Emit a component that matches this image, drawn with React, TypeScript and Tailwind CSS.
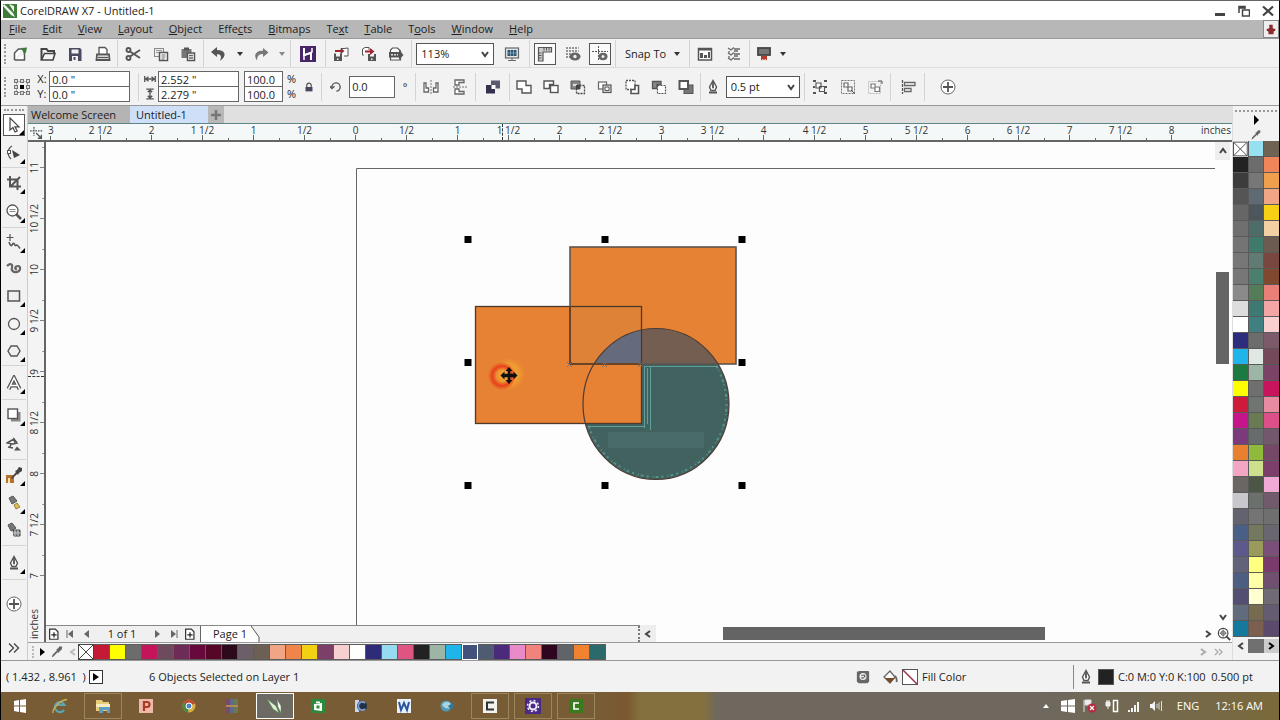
import { useState } from "react";
import type { ReactNode } from "react";

const MENUS = [
  ["", "F", "ile"],
  ["", "E", "dit"],
  ["", "V", "iew"],
  ["", "L", "ayout"],
  ["", "O", "bject"],
  ["Effe", "c", "ts"],
  ["", "B", "itmaps"],
  ["Te", "x", "t"],
  ["", "T", "able"],
  ["T", "o", "ols"],
  ["", "W", "indow"],
  ["", "H", "elp"],
];

const H_RULER = [
  "2 1/2", "2", "1 1/2", "1", "1/2", "0", "1/2", "1", "1 1/2", "2", "2 1/2", "3",
  "3 1/2", "4", "4 1/2", "5", "5 1/2", "6", "6 1/2", "7", "7 1/2", "8",
];

const V_RULER = ["11", "10 1/2", "10", "9 1/2", "9", "8 1/2", "8", "7 1/2", "7"];

const DOC_PALETTE = [
  "none", "#c41a36", "#ffff00", "#6c6c6c", "#c4155a", "#6d4a5c", "#6f2b58", "#68083c",
  "#560628", "#2c0a1c", "#6c6068", "#6c6055", "#f0a585", "#f0854c", "#f2d012", "#7c3f68",
  "#f6cfcf", "#ffffff", "#2e2c78", "#96dcf0", "#e05482", "#222222", "#9db5a5", "#1fb5ea",
  "#44507c", "#4f5b70", "#4b2a7c", "#e88bc8", "#f0837c", "#2f061f", "#606468", "#f08230",
  "#2a6a6a",
];

// default CMYK palette, one array per column
const CMYK_PALETTE = [
  [
    "none", "#222222", "#3c3c3c", "#555555", "#666666", "#6f6f6f", "#747474", "#777777",
    "#777777", "#8a8a8a", "#dddddd", "#ffffff", "#2e2c7c", "#1fb5ea", "#1b7a3f", "#ffff00",
    "#cf1b3b", "#c5158a", "#7a3a7b", "#e8802f", "#f2a6c4", "#6a6664", "#c8c8cc", "#62636f",
    "#4a5f86", "#5c5a8c", "#62637a", "#4c5f82", "#534f72", "#606c7c", "#14799c",
  ],
  [
    "#96e0f0", "#6c6c6c", "#777777", "#606a74", "#4c565c", "#4e6c69", "#3f7a6c", "#5f7b74",
    "#4a7f6e", "#547c58", "#3f7a72", "#3f7f80", "#6c6c6c", "#dfe8e2", "#9db5a5", "#6f6f6f",
    "#717571", "#6a7a52", "#656c6b", "#8fba3c", "#cde08c", "#4c5644", "#6c706c", "#747474",
    "#74785f", "#999a5c", "#ffff80", "#ffffa8", "#ffffd2", "#766a50", "#7c5f4e",
  ],
  [
    "#6f6353", "#f0855a", "#f0a04c", "#f0a585", "#f7cf14", "#f3cfa4", "#6c5b50", "#7a4640",
    "#80492f", "#ea7f78", "#f3a4a4", "#f9d0cf", "#7c5a6a", "#744a5a", "#7b4466", "#c8145c",
    "#e88ba0", "#dd4f88", "#73576c", "#764868", "#7c3f6c", "#f0a8d4", "#705a6c", "#6f6f6f",
    "#6a6670", "#7a5078", "#7a3a6c", "#6f5070", "#706a74", "#645c70", "#5c4a6c",
  ],
];

const G = "#555";

const ICONS: Record<string, ReactNode> = {
  newDoc: (
    <>
      <path d="M2.5 14V7l4-4H10M12.500 8v6h-10" stroke={G} strokeWidth="1.5" fill="#fff" />
      <path d="M9 2l6-.5-1 5-2 2.500-1-3.500z" fill="#3e7a3e" />
    </>
  ),
  open: (
    <>
      <path d="M1.5 14V3h5L8 5h6v2" stroke="#444" strokeWidth="2" fill="none" />
      <path d="M1.5 14l3-6.500H15L13 14z" fill="#f4f4f4" stroke="#444" strokeWidth="1.6" />
    </>
  ),
  save: (
    <path
      d="M2 2h11l1.500 1.500V15H2zM4.500 3.500v4h7v-4zM5 10v5h6v-5zM6.500 11h2v3h-2z"
      fill="#4a4a60"
      fillRule="evenodd"
    />
  ),
  print: (
    <>
      <path d="M4 8V1.500h6l2 2V8" fill="#fff" stroke={G} strokeWidth="1.3" />
      <path d="M2 8.500h12l.5 5.500h-13z" fill="#fff" stroke={G} strokeWidth="1.8" />
      <path d="M3 11.500h10" stroke={G} strokeWidth="1.5" />
    </>
  ),
  cut: (
    <g fill="none" stroke={G} strokeWidth="1.9">
      <circle cx="3.500" cy="4" r="2" />
      <circle cx="3.500" cy="12" r="2" />
      <path d="M5 5.500L15 12M5 10.500L15 4" />
    </g>
  ),
  copy: (
    <>
      <rect x="1.500" y="2.500" width="9" height="8" fill="#eee" stroke="#888" />
      <path d="M3 4.500h6M3 6.500h3" stroke="#999" />
      <rect x="6.500" y="6.500" width="8" height="8" fill="#fff" stroke={G} strokeWidth="1.5" />
      <path d="M8.500 9h4M8.500 11h4M8.500 13h3" stroke="#666" />
    </>
  ),
  paste: (
    <>
      <path d="M1.5 3h10v9h-10z" fill="#777" />
      <path d="M4 1.500h5v3H4z" fill="#555" />
      <rect x="7.500" y="7" width="7" height="7.500" fill="#fff" stroke={G} strokeWidth="1.5" />
      <path d="M9 9.500h4M9 12h4" stroke="#666" strokeWidth="1.300" />
    </>
  ),
  undo: <path d="M6 1L0 6l6 5V8.200c4-.2 5 2 3 6.800C16 10 15 4 6 4z" fill="#555" />,
  redo: <path d="M10 2l5.500 4.500L10 11V8C6 8 4 10 4 14.500 0 9 3 4.500 10 4.700z" fill="#777" />,
  search: (
    <>
      <rect width="16" height="16" fill="#472566" />
      <path d="M4 2v7l7-2v7" stroke="#fff" strokeWidth="2" fill="none" />
      <path d="M12 2v4L4 9.500V14" stroke="#fff" strokeWidth="1.500" fill="none" />
    </>
  ),
  importI: (
    <>
      <path d="M8 8V2.500h3l4-.5v8h-4" fill="#fff" stroke={G} />
      <path d="M2 5h7" stroke="#a02430" strokeWidth="2" />
      <path d="M8 2L11.500 5 8 8z" fill="#a02430" />
      <path d="M1 7.500h8V15H1zM3 7.500v3h4v-3zM4 12.500v1.500h1.500v-1.500z" fill={G} fillRule="evenodd" />
    </>
  ),
  exportI: (
    <>
      <path d="M3 9H1.500V3L4 1.500h4V4" fill="#fff" stroke={G} />
      <path d="M4 5.500h6" stroke="#a02430" strokeWidth="2" />
      <path d="M9 2l4.500 3.500L9 9z" fill="#a02430" />
      <path d="M7 8h8v7H7zM9 8v2.500h4V8zM10 12.500V14h1.500v-1.500z" fill={G} fillRule="evenodd" />
    </>
  ),
  publish: (
    <>
      <path d="M2.500 14V4l2-2h5l3 3v9z" fill="#fff" stroke={G} strokeWidth="1.2" />
      <path d="M1 6h10V3.500L15.500 9 11 14v-2.500H1z" fill="#555" />
      <path d="M3 8.800h7" stroke="#ddd" strokeDasharray="2 1" strokeWidth="1.500" />
    </>
  ),
  fullscreen: (
    <>
      <rect x="1.500" y="2" width="13" height="10" fill="#dfe8ee" stroke="#666" strokeWidth="1.2" />
      <rect x="3.500" y="4" width="9" height="6" fill="#2f5470" />
      <path d="M6.500 4v6M9.500 4v6M4 7h8" stroke="#7d9aae" />
      <path d="M4 14.500h8M8 12v2" stroke="#666" />
    </>
  ),
  rulers: (
    <>
      <path d="M1.500 1.500h13V6H6v9H1.500z" fill="#ccc" stroke="#555" strokeWidth="1.2" />
      <path d="M7 2v2.500M9.500 2v2.500M12 2v2.500M2 7h2.500M2 9.500h2.500M2 12h2.500" stroke="#555" />
    </>
  ),
  gridEye: (
    <>
      <path d="M1 2h13M1 5h13M1 8h6M1 11h5M2 1v12M5 1v12M8 1v6M11 1v5" stroke="#777" strokeDasharray="2 1" />
      <ellipse cx="10" cy="10.500" rx="5.500" ry="4" fill="#666" />
      <circle cx="10" cy="10.500" r="1.700" fill="#eee" />
    </>
  ),
  guideEye: (
    <>
      <path d="M0 5.500h16M6.500 0v14" stroke={G} strokeDasharray="2 1" />
      <ellipse cx="11" cy="10.500" rx="4.500" ry="3.700" fill="#666" />
      <circle cx="11" cy="10.500" r="1.500" fill="#eee" />
    </>
  ),
  options: (
    <>
      <rect x="1.500" y="2.500" width="13" height="11.500" fill="#fff" stroke={G} strokeWidth="1.500" />
      <path d="M1 3.500h14" stroke={G} strokeWidth="2" />
      <path d="M3 7h3v5H3zM7 9h3v3H7zM11 6h2v6h-2z" fill={G} />
    </>
  ),
  launcher: (
    <path
      d="M2 2l3 2 3-2.500M2 7l3 2 3-2.500M2 12l3 2 3-2.500M8 3h6M8 5h4M8 8h6M8 10h4M8 13h6M3 5v2M3 10v2"
      stroke="#666"
      strokeWidth="1.300"
      fill="none"
    />
  ),
  present: (
    <>
      <rect x="2" y="2" width="12" height="7" fill="#777" stroke="#444" strokeWidth="1.8" />
      <path d="M5 10h6v4.500l-2-1.500-1 1.500L7 13l-2 1.500z" fill="#b83a2a" />
    </>
  ),
  origin: (
    <>
      <path d="M2.500 2.500h11v11h-11z" stroke="#777" fill="none" strokeDasharray="2 1" />
      <path d="M0 0h4v4H0zM6 0h4v4H6zM12 0h4v4h-4zM0 6h4v4H0zM12 6h4v4h-4zM0 12h4v4H0zM6 12h4v4H6zM12 12h4v4h-4z" fill="#777" />
      <path d="M1 1h2v2H1zM7 1h2v2H7zM13 1h2v2h-2zM1 7h2v2H1zM13 7h2v2h-2zM1 13h2v2H1zM7 13h2v2H7zM13 13h2v2h-2z" fill="#ddd" />
      <rect x="6" y="6" width="4" height="4" fill="#000" />
    </>
  ),
  widthI: <path d="M1 4v8M15 4v8M1.500 8h13M6 5L2.500 8 6 11M10 5l3.500 3-3.500 3" stroke={G} strokeWidth="1.8" fill="none" />,
  heightI: <path d="M3 1.500h10M3 14.500h10M8 2v12M5 5.500L8 3l3 2.500M5 10.500L8 13l3-2.500" stroke={G} strokeWidth="1.8" fill="none" />,
  lock: (
    <>
      <path d="M5.500 8V6a2.500 2.500 0 015 0v2" stroke="#555" strokeWidth="1.400" fill="none" />
      <rect x="4" y="8" width="8" height="5" fill="#4a4560" />
    </>
  ),
  rotate: (
    <path d="M2.500 8a5.500 5.500 0 116 5.500M0 7l2.500 3L6 7" stroke={G} strokeWidth="1.800" fill="none" />
  ),
  mirrorH: (
    <>
      <path d="M8 1v14" stroke="#777" strokeDasharray="2 1" />
      <path d="M1 4h2v5h2.500v4H1zM15 4h-2v5h-2.500v4H15z" fill="#fff" stroke="#666" strokeWidth="1.300" />
    </>
  ),
  mirrorV: (
    <>
      <path d="M1 8h14" stroke="#777" strokeDasharray="2 1" />
      <path d="M3 1h9v2.500H7V6H3zM3 15h9v-2.500H7V10H3z" fill="#fff" stroke="#666" strokeWidth="1.300" />
    </>
  ),
  front: (
    <>
      <path d="M6 1.500h9v8H6z" fill="#5b5870" />
      <path d="M1 6h9v8.500H1z" fill="#35324f" />
      <rect x="6.500" y="6" width="4" height="4" fill="#fff" />
    </>
  ),
  weld: <path d="M1 2h9v4.500h5v7.500H6v-4H1z" fill="#fff" stroke={G} strokeWidth="1.400" />,
  trim: (
    <>
      <path d="M1 2h9.500v3.500h-4v4H1z" fill="#fff" stroke={G} strokeWidth="1.400" />
      <rect x="7.500" y="6.500" width="7.500" height="7" fill="#fff" stroke={G} strokeWidth="1.400" />
    </>
  ),
  intersect: (
    <>
      <path d="M1 2h9v8H1z" fill="#888" stroke={G} />
      <path d="M6.500 6.500h8v8h-8z" fill="none" stroke="#444" strokeDasharray="2 1" strokeWidth="1.300" />
      <path d="M3 5h4v2H3z" fill="#ddd" />
      <path d="M6 6h4v4H6z" fill="#444" />
    </>
  ),
  simplify: (
    <>
      <rect x="1.500" y="3" width="8" height="7" fill="#fff" stroke="#666" strokeWidth="1.2" />
      <rect x="6" y="6" width="8" height="7.500" fill="#ddd" stroke={G} strokeWidth="1.2" />
      <path d="M8 8h4v3.500H8z" fill="#fff" stroke={G} />
    </>
  ),
  frontMinus: (
    <>
      <rect x="2" y="1.500" width="9" height="9" fill="#fff" stroke="#555" strokeDasharray="2 1" strokeWidth="1.300" />
      <path d="M11 6.500h3.500v8H7v-4h4z" fill="#fff" stroke={G} strokeWidth="1.600" />
    </>
  ),
  backMinus: (
    <>
      <path d="M1.500 2.500H10v3H6v4H1.500z" fill="#888" stroke={G} strokeWidth="1.300" />
      <rect x="6.500" y="6.500" width="8" height="8" fill="#fff" stroke={G} strokeDasharray="2 1" strokeWidth="1.200" />
    </>
  ),
  boundary: (
    <>
      <rect x="6" y="6" width="9" height="8.500" fill="#777" stroke="#555" />
      <rect x="1.500" y="2" width="8.500" height="8" fill="#fff" stroke={G} strokeWidth="2" />
    </>
  ),
  nib: (
    <>
      <path d="M8 1.500L4.500 8 6 11.500h4L11.500 8z" fill="#fff" stroke={G} strokeWidth="1.400" />
      <path d="M8 3v5M4 13.500h8" stroke={G} strokeWidth="1.800" />
      <circle cx="8" cy="8.500" r="1" fill={G} />
    </>
  ),
  group: (
    <>
      <path d="M1 1h3v2H1zM12 1h3v2h-3zM1 13h3v2H1zM12 13h3v2h-3zM1 7h2v2H1zM13 7h2v2h-2z" fill={G} />
      <path d="M4 4h5v5H4zM7.500 7.500h5v5h-5z" fill="#fff" stroke={G} strokeWidth="1.200" />
    </>
  ),
  ungroup: (
    <>
      <rect x="1.500" y="1.500" width="13" height="13" fill="none" stroke="#777" strokeDasharray="2 1" />
      <path d="M4 4h4v4H4zM8 8h4v4H8z" fill="#fff" stroke="#666" strokeWidth="1.200" />
      <path d="M11 11l4 4" stroke={G} />
    </>
  ),
  ungroupAll: (
    <>
      <rect x="1.500" y="2.500" width="12" height="12" fill="none" stroke="#bbb" strokeDasharray="2 1" />
      <path d="M4 5h4v4H4zM8 8h4.500v4.500H8z" fill="#fff" stroke="#777" strokeWidth="1.200" />
      <path d="M11 2h4v3" stroke={G} fill="none" />
    </>
  ),
  align: (
    <>
      <path d="M2.500 1v14" stroke={G} strokeDasharray="3 1" strokeWidth="1.300" />
      <path d="M4.500 3.500H15v3H4.500zM4.500 9.500H11v3H4.500z" fill="#fff" stroke="#666" strokeWidth="1.300" />
    </>
  ),
  plus: (
    <>
      <circle cx="8" cy="8" r="7" fill="#fff" stroke="#666" />
      <path d="M8 3v10M3 8h10" stroke={G} strokeWidth="1.800" />
    </>
  ),
  pick: <path d="M4 1v12l3-2.500L9 15l2.200-1L9 9.800h4z" fill="#fff" stroke="#444" strokeWidth="1.200" />,
  shape: (
    <>
      <path d="M6 1C1 4 1 10 5 14" stroke={G} strokeWidth="1.300" fill="none" />
      <rect x="1.500" y="5.500" width="3" height="3" fill="#fff" stroke={G} />
      <path d="M6 5l8 5-6 3z" fill="#444" />
    </>
  ),
  crop: <path d="M4 1v10.500h11M1 4.500h10.500V15M5 11l9-9" stroke={G} strokeWidth="2" fill="none" />,
  zoomT: (
    <>
      <circle cx="6.500" cy="6.500" r="5.500" fill="#fff" stroke={G} strokeWidth="1.300" />
      <path d="M3.500 5.500h6M3.500 7.500h6" stroke="#888" />
      <path d="M10 10l5 5" stroke={G} strokeWidth="2.500" />
    </>
  ),
  freehand: (
    <>
      <path d="M4 0v7M.5 3.500h7" stroke={G} strokeWidth="1.200" />
      <path d="M3 8c2 6 3 3 4 1.500s2 3 3 2 2 0 4 3" stroke={G} strokeWidth="1.600" fill="none" />
    </>
  ),
  artistic: (
    <path d="M1 5c3-3 6-2 5 1s1 6 5 5 4-6 1-6-4 3-1 3.500" stroke="#666" strokeWidth="2.200" fill="none" />
  ),
  rectT: <rect x="2" y="3" width="11.500" height="10" fill="#f0f0f0" stroke={G} strokeWidth="1.500" />,
  ellipseT: <circle cx="8" cy="8" r="5.500" fill="#f4f4f4" stroke={G} strokeWidth="1.300" />,
  polygonT: <path d="M5 3h6l3 5-3 5H5L2 8z" fill="#f0f0f0" stroke={G} strokeWidth="1.400" />,
  textT: (
    <>
      <path d="M2.500 14L8 3l5.500 11M5 10.500h6" stroke={G} strokeWidth="4" fill="none" />
      <path d="M2.500 14L8 3l5.500 11M5 10.500h6" stroke="#fff" strokeWidth="1.500" fill="none" />
    </>
  ),
  shadowT: (
    <>
      <path d="M5 5h9.500v9.500H5z" fill="#888" />
      <rect x="2" y="2" width="9.500" height="9.500" fill="#fff" stroke={G} strokeWidth="1.400" />
    </>
  ),
  transp: (
    <>
      <path d="M1 7l7-4 3 4-4 1zM5 8l-1 3M2 11l5 1" fill="#fff" stroke={G} strokeWidth="1.500" />
      <path d="M8 14.500l3-4 4 4z" fill={G} />
      <path d="M7 1l4 5-3 1z" fill={G} />
    </>
  ),
  dropperT: (
    <>
      <path d="M0 8h8v8H0z" fill="#b5702c" />
      <path d="M2 11h2v5H2z" fill="#fbe2b8" />
      <path d="M5 11l5-6-1-1 2-1 2-3 3 1v3l-3 2-1 2-1-1-5 5z" fill="#444" />
    </>
  ),
  fillT: (
    <>
      <path d="M3 3l4-2 4 5-5 3z" fill="#777" stroke={G} />
      <path d="M8 10l3-2 3 4-4 2z" fill="#e0bd50" stroke="#998040" />
    </>
  ),
  meshT: (
    <>
      <path d="M2 3l4-2 4 5-5 3z" fill="#777" stroke={G} />
      <path d="M7 8h7v6H8z" fill="#777" stroke="#444" />
      <path d="M9 8v6M12 8v6M7 11h7" stroke="#ccc" />
    </>
  ),
  chevrons: <path d="M3 3.500L7.500 8 3 12.500M8 3.500l4.500 4.500L8 12.500" stroke="#444" strokeWidth="1.300" fill="none" />,
  pageAdd: (
    <>
      <path d="M3 2.500h6.500l3 3V14H3z" fill="#fff" stroke="#333" strokeWidth="1.400" />
      <path d="M8 6v6M5 9h6" stroke="#222" strokeWidth="1.400" />
    </>
  ),
  dropper: <path d="M2 14l1-3 5-5-1-1 2-1 2-2.500L14 2l-.5 3L11 7l-1 2-1-1-5 5z" fill="#666" />,
  navigator: (
    <>
      <circle cx="7" cy="7" r="5.500" fill="#fff" stroke="#444" strokeWidth="1.300" />
      <circle cx="7" cy="7" r="2.500" fill="none" stroke="#555" />
      <path d="M7 3v8M3 7h8" stroke="#555" />
      <path d="M10.500 10.500L15 15" stroke="#444" strokeWidth="2.200" />
    </>
  ),
  corner: (
    <>
      <path d="M4.500 1v10M0 5.500h14" stroke={G} strokeDasharray="2 1" strokeWidth="1.400" />
      <path d="M7 8l6 6M13 10v4H9" stroke={G} strokeWidth="1.500" fill="none" />
    </>
  ),
  snapshot: (
    <>
      <path d="M1 2l3-1h10l1 1v11l-2 2H3l-2-2z" fill="#666" />
      <circle cx="8" cy="7.500" r="4" fill="#eee" />
      <path d="M6 6h4v2.500M6 9h3" stroke="#555" strokeWidth="1.300" fill="none" />
    </>
  ),
  bucket: (
    <>
      <path d="M2 8l6-6 5 6-5 6z" fill="#fff" stroke="#666" strokeWidth="1.300" />
      <path d="M3 9h10l-5 5z" fill="#7a4a24" />
      <path d="M13 7c2 2 2 4 1.500 6" stroke="#666" strokeWidth="1.800" fill="none" />
    </>
  ),
};

const Icon = ({ name, className = "size-4" }: { name: string; className?: string }) => (
  <svg viewBox="0 0 16 16" className={`shrink-0 ${className}`} aria-hidden="true">
    {ICONS[name]}
  </svg>
);

const Caret = ({ muted = false }: { muted?: boolean }) => (
  <svg viewBox="0 0 6 4" className="h-1 w-1.5">
    <path d="M0 0h6L3 4z" fill={muted ? "#888" : "#333"} />
  </svg>
);

const Chevron = ({ dir, color = "#444" }: { dir: "left" | "right" | "up" | "down"; color?: string }) => {
  const d = {
    left: "M7 2L3 5l4 3",
    right: "M3 2l4 3-4 3",
    up: "M2 7l3-4 3 4",
    down: "M2 3l3 4 3-4",
  }[dir];
  return (
    <svg viewBox="0 0 10 10" className="size-2.5">
      <path d={d} stroke={color} strokeWidth="2" fill="none" />
    </svg>
  );
};

const ToolButton = ({ icon, label, boxed = false }: { icon: string; label: string; boxed?: boolean }) => (
  <button aria-label={label} className="flex h-[26px] w-[26px] shrink-0 items-center justify-center">
    <span
      className={
        boxed
          ? "flex h-[22px] w-[22px] items-center justify-center border border-[#555] bg-[#fafafa]"
          : "flex"
      }
    >
      <Icon name={icon} />
    </span>
  </button>
);

const CaretButton = ({ label, muted }: { label: string; muted?: boolean }) => (
  <button aria-label={label} className="flex h-[26px] w-3 shrink-0 items-center justify-center">
    <Caret muted={muted} />
  </button>
);

const Group = ({ className, children }: { className: string; children: ReactNode }) => (
  <div className={`flex h-7 shrink-0 items-center justify-evenly border-[#d4d4d4] ${className}`}>{children}</div>
);

const Grip = () => (
  <div className="ml-[3px] h-5 w-0 shrink-0 border-l-2 border-dotted border-[#999]" />
);

const TitleBar = () => (
  <header className="flex h-[19px] shrink-0 items-center bg-white pl-0.5">
    <svg viewBox="0 0 14 14" className="size-3.5">
      <rect width="14" height="14" fill="#3f7c3a" />
      <path d="M1 0l9 9 2 4-4-2-8-9zM6 0l5 8V2z" fill="#f4f4f4" />
    </svg>
    <h1 className="ml-[3px] text-[11px] leading-4 text-[#222]">CorelDRAW X7 - Untitled-1</h1>
    <div className="ml-auto flex items-center gap-1.5 pr-0.5">
      <button aria-label="Minimize" className="flex h-4 w-[18px] items-end justify-center pb-[3px]">
        <span className="h-[3px] w-2.5 bg-[#444]" />
      </button>
      <button aria-label="Restore" className="flex h-4 w-[18px] items-center justify-center">
        <svg viewBox="0 0 12 12" className="size-3">
          <path d="M1 8V1.500h6V4M1 3h6" stroke="#444" strokeWidth="1.500" fill="none" />
          <rect x="4.500" y="5" width="7" height="6" fill="#fff" stroke="#444" strokeWidth="1.500" />
        </svg>
      </button>
      <button aria-label="Close" className="flex h-4 w-[18px] items-center justify-center">
        <svg viewBox="0 0 12 12" className="size-3">
          <path d="M1 1.500l10 9M11 1.500l-10 9" stroke="#444" strokeWidth="2.200" />
        </svg>
      </button>
    </div>
  </header>
);

const MenuBar = () => (
  <nav className="flex h-[19px] shrink-0 items-center border-b border-[#999] bg-[#b7b7b7]">
    {MENUS.map(([pre, key, post]) => (
      <button key={pre + key + post} className="px-2 text-[11px] leading-4 text-[#222]">
        {pre}
        <u>{key}</u>
        {post}
      </button>
    ))}
    <button aria-label="Sign in" className="ml-auto flex h-full w-4 items-center justify-center border border-[#888] bg-[#eee]">
      <svg viewBox="0 0 14 14" className="size-3">
        <path d="M4 13v-3L2 9V7l3-1V2h4v4l3 1v2l-2 1v3z" fill="#8a2c2c" />
      </svg>
    </button>
  </nav>
);

const StandardBar = () => (
  <div className="flex h-7 shrink-0 items-center bg-[#f2f2f2] pt-0.5 text-[11px] text-[#222]">
    <Grip />
    <Group className="w-[112px] border-r">
      <ToolButton icon="newDoc" label="New" />
      <ToolButton icon="open" label="Open" />
      <ToolButton icon="save" label="Save" />
      <ToolButton icon="print" label="Print" />
    </Group>
    <Group className="w-[86px] border-r">
      <ToolButton icon="cut" label="Cut" />
      <ToolButton icon="copy" label="Copy" />
      <ToolButton icon="paste" label="Paste" />
    </Group>
    <Group className="w-[87px] border-r">
      <ToolButton icon="undo" label="Undo" />
      <CaretButton label="Undo history" />
      <ToolButton icon="redo" label="Redo" />
      <CaretButton label="Redo history" muted />
    </Group>
    <Group className="w-[35px] border-r">
      <ToolButton icon="search" label="Search content" />
    </Group>
    <Group className="w-[86px] border-r">
      <ToolButton icon="importI" label="Import" />
      <ToolButton icon="exportI" label="Export" />
      <ToolButton icon="publish" label="Publish to PDF" />
    </Group>
    <Group className="w-[118px] border-r">
      <label className="relative flex">
        <select
          aria-label="Zoom level"
          className="h-[22px] w-[78px] appearance-none border border-[#555] bg-white pl-1 leading-4"
        >
          <option>113%</option>
        </select>
        <span className="pointer-events-none absolute top-1.5 right-1">
          <Chevron dir="down" />
        </span>
      </label>
      <ToolButton icon="fullscreen" label="Full-screen preview" />
    </Group>
    <Group className="w-[86px] border-r">
      <ToolButton icon="rulers" label="Show rulers" boxed />
      <ToolButton icon="gridEye" label="Show grid" />
      <ToolButton icon="guideEye" label="Show guidelines" boxed />
    </Group>
    <Group className="w-[74px] border-r">
      <button className="flex items-center gap-2 whitespace-nowrap">
        Snap To
        <Caret />
      </button>
    </Group>
    <Group className="w-[60px] border-r">
      <ToolButton icon="options" label="Options" />
      <ToolButton icon="launcher" label="Application launcher" />
    </Group>
    <Group className="w-10">
      <ToolButton icon="present" label="Welcome" />
      <CaretButton label="Welcome options" />
    </Group>
  </div>
);

const Field = ({ label, value, className }: { label: string; value: string; className: string }) => {
  const [text, setText] = useState(value);
  return (
    <input
      aria-label={label}
      value={text}
      onChange={(e) => setText(e.target.value)}
      className={`border border-[#666] bg-white pl-0.5 leading-3 ${className}`}
    />
  );
};

const PropertyBar = () => (
  <div className="flex h-[39px] shrink-0 items-center border-t border-b border-t-[#dcdcdc] border-b-[#999] bg-[#f2f2f2] text-[11px] leading-4 text-[#222]">
    <Grip />
    <Group className="w-[133px] border-r">
      <Icon name="origin" />
      <div className="grid grid-cols-[12px_81px] grid-rows-[15px_15px] items-center">
        <span>X:</span>
        <Field label="X position" value={'0.0 "'} className="h-4" />
        <span>Y:</span>
        <Field label="Y position" value={'0.0 "'} className="h-4" />
      </div>
    </Group>
    <Group className="w-[183px] border-r">
      <div className="grid grid-cols-[14px_81px] grid-rows-[15px_15px] items-center">
        <Icon name="widthI" className="size-3" />
        <Field label="Width" value={'2.552 "'} className="h-4" />
        <Icon name="heightI" className="size-3" />
        <Field label="Height" value={'2.279 "'} className="h-4" />
      </div>
      <div className="grid grid-cols-[39px_14px] grid-rows-[15px_15px] items-center">
        <Field label="Horizontal scale" value="100.0" className="h-4" />
        <span className="pl-1">%</span>
        <Field label="Vertical scale" value="100.0" className="h-4" />
        <span className="pl-1">%</span>
      </div>
      <button aria-label="Lock ratio">
        <Icon name="lock" className="size-3.5" />
      </button>
    </Group>
    <Group className="w-[94px] border-r">
      <Icon name="rotate" className="size-3" />
      <Field label="Angle of rotation" value="0.0" className="h-[22px] w-[46px]" />
      <span>°</span>
    </Group>
    <Group className="w-[60px] border-r">
      <ToolButton icon="mirrorH" label="Mirror horizontally" />
      <ToolButton icon="mirrorV" label="Mirror vertically" />
    </Group>
    <Group className="w-[34px] border-r">
      <ToolButton icon="front" label="Order" />
    </Group>
    <Group className="w-[191px] border-r">
      <ToolButton icon="weld" label="Weld" />
      <ToolButton icon="trim" label="Trim" />
      <ToolButton icon="intersect" label="Intersect" />
      <ToolButton icon="simplify" label="Simplify" />
      <ToolButton icon="frontMinus" label="Front minus back" />
      <ToolButton icon="backMinus" label="Back minus front" />
      <ToolButton icon="boundary" label="Boundary" />
    </Group>
    <Group className="w-[104px] border-r">
      <Icon name="nib" />
      <label className="relative flex">
        <select
          aria-label="Outline width"
          className="h-[22px] w-[74px] appearance-none border border-[#555] bg-white pl-1 leading-4"
        >
          <option>0.5 pt</option>
        </select>
        <span className="pointer-events-none absolute top-1.5 right-1">
          <Chevron dir="down" />
        </span>
      </label>
    </Group>
    <Group className="w-[86px] border-r">
      <ToolButton icon="group" label="Group" />
      <ToolButton icon="ungroup" label="Ungroup" />
      <ToolButton icon="ungroupAll" label="Ungroup all" />
    </Group>
    <Group className="w-[34px] border-r">
      <ToolButton icon="align" label="Align and distribute" />
    </Group>
    <Group className="w-[46px]">
      <ToolButton icon="plus" label="Quick customize" />
    </Group>
  </div>
);

const TOOL_GROUPS = [
  { height: "h-[57px]", tools: ["pick", "shape"] },
  { height: "h-15", tools: ["crop", "zoomT"] },
  { height: "h-[138px]", tools: ["freehand", "artistic", "rectT", "ellipseT", "polygonT"] },
  { height: "h-[34px]", tools: ["textT"] },
  { height: "h-15", tools: ["shadowT", "transp"] },
  { height: "h-[86px]", tools: ["dropperT", "fillT", "meshT"] },
  { height: "h-[34px]", tools: ["nib"] },
];

const NO_FLYOUT = ["artistic", "transp", "meshT"];

const Toolbox = () => (
  <aside className="flex w-[27px] shrink-0 flex-col items-center border-r border-[#ccc] bg-[#f2f2f2]">
    <div className="mt-[3px] h-0 w-5 shrink-0 border-t-2 border-dotted border-[#999]" />
    {TOOL_GROUPS.map((group) => (
      <div
        key={group.tools[0]}
        className={`flex w-6 shrink-0 flex-col items-center justify-evenly border-b border-[#d4d4d4] ${group.height}`}
      >
        {group.tools.map((tool) => (
          <button key={tool} aria-label={tool} className="flex h-[26px] w-[22px] items-center">
            <span
              className={
                tool === "pick"
                  ? "relative flex size-[22px] items-center justify-center border border-[#555] bg-white"
                  : "relative flex size-[22px] items-center justify-center"
              }
            >
              <Icon name={tool} />
              {!NO_FLYOUT.includes(tool) && (
                <svg viewBox="0 0 5 5" className="absolute right-0 bottom-0 size-[5px]">
                  <path d="M5 0v5H0z" fill="#000" />
                </svg>
              )}
            </span>
          </button>
        ))}
      </div>
    ))}
    <button aria-label="Quick customize" className="mt-4">
      <Icon name="plus" />
    </button>
    <button aria-label="More tools" className="mt-auto mb-1">
      <Icon name="chevrons" />
    </button>
  </aside>
);

const HTicks = () => (
  <svg viewBox="0 0 51 5" className="h-[5px] w-[51px]">
    <path d="M0.500 3v2M25.500 0v5" stroke="#666" />
  </svg>
);

const VTicks = () => (
  <svg viewBox="0 0 5 51" className="h-[51px] w-[5px]">
    <path d="M3 0.500h2M0 25.500h5" stroke="#666" />
  </svg>
);

const HorizontalRuler = () => (
  <div className="relative flex h-[19px] shrink-0 overflow-hidden border-t border-b-2 border-t-[#5e8585] border-b-[#666] bg-[#f4f8f8] text-[10px] leading-3 text-[#333]">
    <button aria-label="Ruler origin" className="flex w-[18px] shrink-0 items-end justify-center">
      <Icon name="corner" className="size-3.5" />
    </button>
    <div className="flex w-[29px] shrink-0 flex-col justify-between pl-0.5">
      <span>3</span>
      <svg viewBox="0 0 5 4" className="h-1 w-[5px]">
        <path d="M2.500 0v4" stroke="#666" />
      </svg>
    </div>
    {H_RULER.map((label, i) => (
      <div key={i} className="flex w-[51px] shrink-0 flex-col items-center justify-between">
        <span className="h-2.5">{label}</span>
        <HTicks />
      </div>
    ))}
    <span className="ml-1">inches</span>
    <span className="absolute top-0 left-[474px] h-4 w-px border-l border-dashed border-[#333]" />
  </div>
);

const VerticalRuler = () => (
  <div className="relative flex w-[18px] shrink-0 flex-col overflow-hidden border-r-2 border-[#666] bg-[#f4f4f4] text-[10px] leading-3 text-[#333]">
    {V_RULER.map((label) => (
      <div key={label} className="flex h-[51px] shrink-0 items-center justify-between">
        <span className="w-3 rotate-180 text-center [writing-mode:vertical-rl]">{label}</span>
        <VTicks />
      </div>
    ))}
    <span className="mt-2 w-3 rotate-180 [writing-mode:vertical-rl]">inches</span>
    <span className="absolute top-[234px] left-0 h-px w-4 border-t border-dashed border-[#333]" />
  </div>
);

const HANDLES = [
  [468, 239], [605, 239], [742, 239],
  [468, 362], [742, 362],
  [468, 485], [605, 485], [742, 485],
];

const Drawing = () => (
  <svg className="h-full min-h-0 w-full min-w-0 flex-1 bg-[#fdfdfd]" role="img" aria-label="Drawing page">
    <defs>
      <clipPath id="backRect">
        <rect x="570" y="247" width="166" height="117" />
      </clipPath>
      <clipPath id="overlap">
        <rect x="570" y="306" width="71" height="58" />
      </clipPath>
      <radialGradient id="clickGlow">
        <stop offset="0" stopColor="#f5b040" />
        <stop offset="0.600" stopColor="#f0a030" stopOpacity="0.800" />
        <stop offset="1" stopColor="#e88230" stopOpacity="0" />
      </radialGradient>
      <radialGradient id="clickRing">
        <stop offset="0.400" stopColor="#e8401c" stopOpacity="0" />
        <stop offset="0.700" stopColor="#e8401c" />
        <stop offset="1" stopColor="#e8401c" stopOpacity="0" />
      </radialGradient>
    </defs>
    <g transform="translate(-46 -142)">
      <path d="M356.500 1200V168.500H3000" stroke="#666" fill="none" />
      <ellipse cx="656" cy="404" rx="73" ry="75.500" fill="#41625f" />
      <ellipse cx="656" cy="404" rx="70.500" ry="73" fill="none" stroke="#56908d" strokeWidth="2" strokeDasharray="2 3 3 2 1 4" />
      <path d="M608 432h96v16h-96z" fill="#496c69" />
      <path d="M644.500 366v62M647.500 368v56M650.500 366v64M588 426.500h56M645 366.500h73" stroke="#5fa09c" fill="none" />
      <rect x="570" y="247" width="166" height="117" fill="#e58234" />
      <rect x="475" y="306" width="166" height="117" fill="#e78133" />
      <rect x="570" y="306" width="71" height="58" fill="#de8238" />
      <ellipse cx="656" cy="404" rx="73" ry="75.500" fill="#735e51" clipPath="url(#backRect)" />
      <ellipse cx="656" cy="404" rx="73" ry="75.500" fill="#656b7d" clipPath="url(#overlap)" />
      <rect x="570" y="247" width="166" height="117" fill="none" stroke="#5c5650" strokeWidth="1.600" />
      <rect x="475.500" y="306.500" width="166" height="117" fill="none" stroke="#4c3a2a" strokeWidth="1.300" />
      <path d="M570 306v58h71" stroke="#6b4424" strokeWidth="2" fill="none" />
      <ellipse cx="656" cy="404" rx="73" ry="75.500" fill="none" stroke="#4a3c34" strokeWidth="1.200" />
      <path d="M567 362l5 5M572 362l-5 5M602 362l5 5M607 362l-5 5M638 362l5 5M643 362l-5 5" stroke="#6c7078" />
      <circle cx="509" cy="374" r="18" fill="url(#clickGlow)" />
      <circle cx="502" cy="376" r="14" fill="url(#clickRing)" />
      <path
        d="M509 367l3.500 4h-2.200v2.700h3.200v-2.200l4 4-4 4v-2.200h-3.200v2.700h2.200l-3.500 4-3.500-4h2.200v-2.700h-3.200v2.200l-4-4 4-4v2.200h3.200V371h-2.200z"
        fill="#111"
      />
      {HANDLES.map(([x, y]) => (
        <rect key={`${x}-${y}`} x={x - 3.5} y={y - 3} width="7" height="7" fill="#000" />
      ))}
    </g>
  </svg>
);

const VerticalScroll = () => (
  <div className="flex w-[17px] shrink-0 flex-col items-center bg-[#fdfdfd] pr-0.5">
    <button aria-label="Scroll up" className="flex h-[18px] w-full items-center justify-center bg-[#eee]">
      <Chevron dir="up" />
    </button>
    <div className="flex-[112]" />
    <div className="w-[13px] flex-[92] bg-[#646464]" />
    <div className="flex-[245]" />
    <button aria-label="Scroll down" className="flex h-4 w-full items-center justify-center">
      <Chevron dir="down" />
    </button>
  </div>
);

const NavArrow = ({ label, flip = false, bar = false }: { label: string; flip?: boolean; bar?: boolean }) => (
  <button aria-label={label} className={flip ? "flex w-4 rotate-180 justify-center" : "flex w-4 justify-center"}>
    <svg viewBox="0 0 8 8" className="size-2">
      <path d="M7 0v8L2 4z" fill="#666" />
      {bar && <path d="M1 0v8" stroke="#666" />}
    </svg>
  </button>
);

const PageBar = () => (
  <div className="flex h-[17px] shrink-0 items-center bg-[#fdfdfd] text-[11px] leading-4 text-[#222]">
    <div className="flex h-full w-[594px] shrink-0 items-center border-t border-[#888] bg-[#f0f0f0]">
      <button aria-label="Add page before" className="flex w-4 justify-center">
        <Icon name="pageAdd" className="size-3.5" />
      </button>
      <NavArrow label="First page" bar />
      <NavArrow label="Previous page" />
      <span className="w-14 text-center">1 of 1</span>
      <NavArrow label="Next page" flip />
      <NavArrow label="Last page" flip bar />
      <button aria-label="Add page after" className="flex w-4 justify-center">
        <Icon name="pageAdd" className="size-3.5" />
      </button>
      <button className="ml-0.5 h-full border-l border-[#666] bg-white pr-1 pl-3 leading-3">Page 1</button>
      <svg viewBox="0 0 10 16" className="h-4 w-2.5">
        <path d="M0 0l8 11v5H0z" fill="#fff" />
        <path d="M0 0l8 11v5" fill="none" stroke="#555" />
      </svg>
      <span className="ml-auto h-4 border-l-2 border-dotted border-[#777]" />
    </div>
    <button aria-label="Scroll left" className="flex h-full w-4 items-center justify-center bg-[#eee]">
      <Chevron dir="left" />
    </button>
    <div className="flex-[67]" />
    <div className="h-[13px] flex-[321] bg-[#646464]" />
    <div className="flex-[155]" />
    <button aria-label="Scroll right" className="flex h-full w-4 items-center justify-center">
      <Chevron dir="right" />
    </button>
    <button aria-label="Navigator" className="flex h-full w-4 items-center justify-center">
      <Icon name="navigator" className="size-3.5" />
    </button>
  </div>
);

const NoColor = () => (
  <svg viewBox="0 0 16 16" className="h-full w-full bg-white">
    <rect x="0.500" y="0.500" width="15" height="15" fill="#fff" stroke="#444" />
    <path d="M1 1l14 14M15 1L1 15" stroke="#444" />
  </svg>
);

const DocumentPalette = () => (
  <div className="flex h-[18px] shrink-0 items-center border-t border-[#999] bg-[#f2f2f2]">
    <span className="ml-1 h-3 border-l-2 border-dotted border-[#bbb]" />
    <button aria-label="Palette menu" className="flex w-4 justify-center">
      <svg viewBox="0 0 6 8" className="h-2 w-1.5">
        <path d="M1 0v8l5-4z" fill="#000" />
      </svg>
    </button>
    <button aria-label="Eyedropper">
      <Icon name="dropper" className="size-3.5" />
    </button>
    <button aria-label="Previous colors" className="ml-1 w-2.5">
      <Chevron dir="left" color="#bbb" />
    </button>
    <div className="flex h-4 bg-[#666]">
      {DOC_PALETTE.map((color, i) => (
        <button
          key={i}
          aria-label={`Document color ${color}`}
          style={{ backgroundColor: color === "none" ? "#fff" : color }}
          className={
            i === 24 ? "h-4 w-4 border border-white" : color === "none" ? "h-4 w-4" : "h-4 w-4 border-y border-r border-[#5c5c5c]"
          }
        >
          {color === "none" && <NoColor />}
        </button>
      ))}
    </div>
    <div className="ml-auto flex items-center gap-1.5 pr-2">
      <Chevron dir="right" color="#aaa" />
      <svg viewBox="0 0 10 10" className="size-2.5">
        <path d="M1 2l3 3-3 3M5 2l3 3-3 3" stroke="#aaa" strokeWidth="1.300" fill="none" />
      </svg>
    </div>
  </div>
);

const ColorPalette = () => (
  <aside className="flex w-[47px] shrink-0 flex-col border-l border-[#ddd] bg-[#f2f2f2]">
    <div className="mx-0.5 mt-1 h-0 shrink-0 border-t-2 border-dotted border-[#999]" />
    <button aria-label="Palette menu" className="flex h-4 shrink-0 items-center justify-center">
      <svg viewBox="0 0 6 10" className="h-2.5 w-1.5">
        <path d="M1 0v10l5-5z" fill="#000" />
      </svg>
    </button>
    <button aria-label="Eyedropper" className="flex h-[13px] shrink-0 items-center justify-center">
      <Icon name="dropper" className="size-3" />
    </button>
    <div className="flex shrink-0 gap-px bg-[#5a5a5a]">
      {CMYK_PALETTE.map((column, c) => (
        <div key={c} className="flex flex-1 flex-col">
          {column.map((color, i) =>
            color === "none" ? (
              <button key={i} aria-label="No color" className="h-4">
                <NoColor />
              </button>
            ) : (
              <button
                key={i}
                aria-label={`Color ${color}`}
                style={{ backgroundColor: color }}
                className="h-4 border-b border-[#5a5a5a]"
              />
            )
          )}
        </div>
      ))}
    </div>
    <div className="mt-0.5 flex h-3.5 shrink-0">
      <button aria-label="Scroll palette left" className="flex flex-1 items-center justify-center">
        <Chevron dir="left" />
      </button>
      <span className="flex-1 bg-[#707070]" />
      <button aria-label="Scroll palette right" className="flex flex-1 items-center justify-center bg-[#ccc]">
        <Chevron dir="right" color="#000" />
      </button>
    </div>
  </aside>
);

const StatusBar = () => (
  <footer className="flex h-8 shrink-0 items-center border-t border-[#999] bg-[#f2f2f2] pl-[5px] text-[11px] leading-4 text-[#222]">
    <span className="w-[83px] whitespace-nowrap">( 1.432 , 8.961 &nbsp;)</span>
    <button aria-label="Play" className="flex size-3.5 items-center justify-center border border-[#333] bg-white">
      <svg viewBox="0 0 6 8" className="h-2 w-1.5">
        <path d="M0 0v8l6-4z" fill="#000" />
      </svg>
    </button>
    <span className="ml-[46px] whitespace-nowrap">6 Objects Selected on Layer 1</span>
    <div className="ml-auto flex items-center">
      <Icon name="snapshot" className="mr-3 size-3.5" />
      <Icon name="bucket" />
      <svg viewBox="0 0 16 16" className="ml-1 size-4">
        <rect x="0.500" y="0.500" width="15" height="15" fill="#fff" stroke="#555" />
        <path d="M1 1l14 14" stroke="#a03048" strokeWidth="1.500" />
      </svg>
      <span className="ml-1 w-[151px]">Fill Color</span>
      <span className="h-6 border-l border-[#888]" />
      <Icon name="nib" className="ml-1 size-4" />
      <span className="ml-1 size-4 border border-[#555] bg-[#222]" />
      <span className="ml-1 w-[161px] whitespace-nowrap">C:0 M:0 Y:0 K:100 &nbsp;0.500 pt</span>
    </div>
  </footer>
);

const TASKS: { name: string; state?: "open" | "active"; art: ReactNode }[] = [
  {
    name: "Start",
    art: <path d="M2 3l5-1v5.500H2zM8 2l6-1v6.500H8zM2 8.500h5V14l-5-1zM8 8.500h6V15l-6-1z" fill="#fff" />,
  },
  {
    name: "Internet Explorer",
    art: (
      <g fill="none">
        <path d="M12 12a5 5 0 11.500-5H4" stroke="#5fa3b0" strokeWidth="2.200" />
        <path d="M1 15C0 11 8 2 15 1.500" stroke="#c9b45a" strokeWidth="1.300" />
      </g>
    ),
  },
  {
    name: "File Explorer",
    state: "open",
    art: (
      <>
        <path d="M1 2h6l1 2h6v9H1z" fill="#e8cc78" />
        <path d="M1 6h14v3H1z" fill="#f8ecc0" />
        <path d="M4 9h11v6h-3v-3H8v3H4z" fill="#5f9ec0" />
      </>
    ),
  },
  {
    name: "PowerPoint",
    art: (
      <>
        <rect x="1" y="1" width="14" height="14" fill="#f0b8a8" />
        <path d="M6 13V4h3a2.500 2.500 0 010 5H6" stroke="#a83c28" strokeWidth="2.200" fill="none" />
      </>
    ),
  },
  {
    name: "Chrome",
    art: (
      <>
        <circle cx="8" cy="8" r="6.500" fill="#d8b040" />
        <path d="M8 8L2.500 4.500A6.500 6.500 0 0114 5.500z" fill="#c04a34" />
        <path d="M8 8l-1 6.500A6.500 6.500 0 012.500 4.500z" fill="#4a8a48" />
        <circle cx="8" cy="8" r="3" fill="#4a84c8" stroke="#fff" />
      </>
    ),
  },
  {
    name: "Archive",
    art: (
      <>
        <path d="M2 1h4v14H2z" fill="#7a4a68" />
        <path d="M6 1h4v14H6z" fill="#5a6a90" />
        <path d="M10 1h4v14h-4z" fill="#6a7a50" />
        <path d="M2 8h12" stroke="#b08a50" strokeWidth="2" />
      </>
    ),
  },
  {
    name: "CorelDRAW",
    state: "active",
    art: (
      <>
        <path d="M0 1l9 7 3 7-6-4z" fill="#dff0d4" stroke="#4f8a48" strokeWidth="0.600" />
        <path d="M10 1l4 7v7l-3-6z" fill="#fff" stroke="#4f8a48" strokeWidth="0.600" />
      </>
    ),
  },
  {
    name: "Store",
    art: (
      <>
        <rect x="1" y="1" width="14" height="14" fill="#2c8a3c" />
        <path d="M4 6l8-1v8l-8-1zM6 5V3.500h4V5" fill="#fff" />
        <path d="M6.500 7.500h3v3h-3z" fill="#2c8a3c" />
      </>
    ),
  },
  {
    name: "Media Player",
    art: (
      <>
        <path d="M2 2h4v12H2z" fill="#c8d4e8" />
        <circle cx="9" cy="8" r="5" fill="#223048" />
        <path d="M12 5a4 4 0 100 6" stroke="#7f9fd8" strokeWidth="1.800" fill="none" />
      </>
    ),
  },
  {
    name: "Word",
    art: (
      <>
        <rect x="1" y="1" width="14" height="14" fill="#e8f0fa" />
        <path d="M3 4l2 8 3-7 3 7 2-8" stroke="#2a559a" strokeWidth="2" fill="none" />
      </>
    ),
  },
  {
    name: "Messenger",
    art: (
      <>
        <circle cx="7" cy="8" r="5.500" fill="#4f98b8" />
        <circle cx="11" cy="8" r="3.500" fill="#2f7896" />
        <path d="M3 7c2-4 7-4 9-1l-3 2 2 3-5-1z" fill="#a8d4e2" />
      </>
    ),
  },
  {
    name: "Camtasia",
    state: "open",
    art: (
      <>
        <rect x="1" y="1" width="14" height="14" fill="#f2f2ee" />
        <path d="M12 4.500H5v7h7" stroke="#333" strokeWidth="2" fill="none" />
      </>
    ),
  },
  {
    name: "Settings",
    state: "open",
    art: (
      <>
        <rect width="16" height="16" fill="#4b2a86" />
        <circle cx="8" cy="8" r="3.500" stroke="#f0ecf8" strokeWidth="2" fill="none" />
        <circle cx="8" cy="8" r="5.500" stroke="#f0ecf8" strokeWidth="1.500" strokeDasharray="2 2.300" fill="none" />
      </>
    ),
  },
  {
    name: "Recorder",
    state: "open",
    art: (
      <>
        <rect x="1" y="1" width="14" height="14" fill="#3a7a1e" />
        <path d="M11 5H6v6h5" stroke="#fff" strokeWidth="1.700" fill="none" />
      </>
    ),
  },
];

const Taskbar = () => (
  <nav className="flex h-7 shrink-0 items-center bg-[linear-gradient(to_right,#775c35_47%,#7b5830_49%,#84703f_50%,#84703f_55%,#6e685e_56%)] text-[11px] text-white">
    {TASKS.map((task) => (
      <button key={task.name} aria-label={task.name} className="flex h-full w-[43px] shrink-0 items-center justify-center first:w-[37px]">
        <span
          className={
            task.state === "active"
              ? "flex h-[26px] w-[38px] items-center justify-center border border-white bg-[#6c6a62]"
              : task.state === "open"
                ? "flex h-[26px] w-[38px] items-center justify-center border border-[#9a875e]"
                : "flex"
          }
        >
          <svg viewBox="0 0 16 16" className="size-4">
            {task.art}
          </svg>
        </span>
      </button>
    ))}
    <div className="ml-auto flex h-full items-center gap-2 bg-linear-to-r from-[#6e685e] to-[#7a693a] pr-4">
      <svg viewBox="0 0 6 4" className="mr-1 h-1 w-1.5">
        <path d="M3 0l3 4H0z" fill="#fff" />
      </svg>
      <svg viewBox="0 0 14 14" className="size-3.5">
        <path d="M0 2l6-1v5.500H0zM7 1l7-1v6.500H7zM0 7.500h6V13l-6-1zM7 7.500h7V14l-7-1z" fill="#fff" />
      </svg>
      <svg viewBox="0 0 14 14" className="size-3.5">
        <path d="M1 1v12M2 1h6v5H2z" stroke="#ddd" fill="#eee" />
        <circle cx="9" cy="9" r="4.500" fill="#b8283c" />
        <path d="M7 7l4 4M11 7l-4 4" stroke="#fff" strokeWidth="1.300" />
      </svg>
      <svg viewBox="0 0 14 14" className="size-3.5">
        <path d="M1 3h4v4H1zM2 1v2M4 1v2M3 7v3" stroke="#eee" fill="#eee" />
        <rect x="8.500" y="1.500" width="4" height="11" stroke="#fff" strokeWidth="1.500" fill="none" />
      </svg>
      <svg viewBox="0 0 14 14" className="size-3.5">
        <path d="M1 11h2v2H1zM4 9h2v4H4zM7 6h2v7H7zM10 3h2v10h-2z" fill="#f4f4f4" />
      </svg>
      <svg viewBox="0 0 14 14" className="size-3.5">
        <path d="M1 5h2l3-3v10L3 9H1z" fill="#f4f4f4" />
        <path d="M8 5v4M10 3.500v7M12.500 2v10" stroke="#ddd" />
      </svg>
      <span className="ml-1.5">ENG</span>
      <time className="ml-2 whitespace-nowrap">12:16 AM</time>
    </div>
  </nav>
);

const App = () => (
  <div className="flex h-screen w-full flex-col overflow-hidden border-x border-t border-x-black border-t-[#666] bg-[#f2f2f2] font-['Open_Sans','Noto_Sans',sans-serif]">
    <TitleBar />
    <MenuBar />
    <StandardBar />
    <PropertyBar />
    <div className="flex min-h-0 flex-1">
      <Toolbox />
      <main className="flex min-w-0 flex-1 flex-col">
        <div className="flex h-[17px] shrink-0 bg-[#e0e0e0] text-[11px] leading-4 text-[#222]">
          <button className="w-[102px] bg-[#b4b4b4] pl-[3px] text-left whitespace-nowrap">Welcome Screen</button>
          <button className="w-[78px] bg-[#cfdff8] pl-1.5 text-left whitespace-nowrap">Untitled-1</button>
          <button aria-label="New document" className="flex w-4 items-center justify-center bg-[#b8b8b8]">
            <svg viewBox="0 0 12 12" className="size-3">
              <path d="M6 1v10M1 6h10" stroke="#777" strokeWidth="2.500" />
            </svg>
          </button>
        </div>
        <HorizontalRuler />
        <div className="flex min-h-0 flex-1">
          <VerticalRuler />
          <div className="flex min-w-0 flex-1 flex-col">
            <div className="flex min-h-0 flex-1">
              <Drawing />
              <VerticalScroll />
            </div>
            <PageBar />
          </div>
        </div>
        <DocumentPalette />
      </main>
      <ColorPalette />
    </div>
    <StatusBar />
    <Taskbar />
  </div>
);

export default App;
